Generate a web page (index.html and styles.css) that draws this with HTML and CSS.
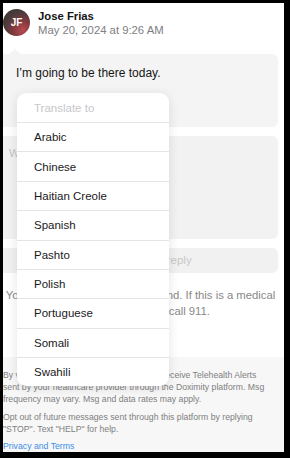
FILE: index.html
```html
<!DOCTYPE html>
<html lang="en">
<head>
<meta charset="utf-8">
<title>Message</title>
<link rel="stylesheet" href="styles.css">
</head>
<body>
<div class="screen">
  <div class="header">
    <div class="avatar">JF</div>
    <div class="meta">
      <div class="name">Jose Frias</div>
      <div class="date">May 20, 2024 at 9:26 AM</div>
    </div>
  </div>
  <div class="bubble">I’m going to be there today.</div>
  <div class="compose">Write a message...</div>
  <div class="reply-btn">Send a secure reply</div>
  <p class="disclaimer">You’ll be notified when we respond. If this is a medical emergency, please call 911.</p>
  <div class="footer">
    <p class="footer-p">By verifying your number, you consent to receive Telehealth Alerts sent by your healthcare provider through the Doximity platform. Msg frequency may vary. Msg and data rates may apply.</p>
    <p class="footer-p">Opt out of future messages sent through this platform by replying "STOP". Text "HELP" for help.</p>
    <a class="footer-link" href="#">Privacy and Terms</a>
  </div>
  <ul class="menu">
    <li class="menu-item menu-head">Translate to</li>
    <li class="menu-item">Arabic</li>
    <li class="menu-item">Chinese</li>
    <li class="menu-item">Haitian Creole</li>
    <li class="menu-item">Spanish</li>
    <li class="menu-item">Pashto</li>
    <li class="menu-item">Polish</li>
    <li class="menu-item">Portuguese</li>
    <li class="menu-item">Somali</li>
    <li class="menu-item">Swahili</li>
  </ul>
</div>
</body>
</html>
```

FILE: styles.css
```css
html, body {
  margin: 0;
  padding: 0;
}
body {
  background: #000;
  width: 290px;
  height: 458px;
  overflow: hidden;
  font-family: "Liberation Sans", Arial, sans-serif;
}
.screen {
  position: relative;
  margin: 3px 0 0 3px;
  width: 281px;
  height: 449px;
  background: #fff;
  overflow: hidden;
  display: flex;
  flex-direction: column;
}
.header {
  display: flex;
  gap: 8px;
  padding-top: 6px;
}
.avatar {
  width: 27px;
  height: 27px;
  border-radius: 50%;
  background: radial-gradient(circle at 72% 78%, #b84a52 0%, #823a3e 32%, #4a3b3c 62%, #353333 100%);
  color: #fff;
  font-weight: bold;
  font-size: 10px;
  display: flex;
  align-items: center;
  justify-content: center;
  flex-shrink: 0;
}
.meta {
  line-height: 14px;
  font-size: 11.3px;
}
.name {
  font-weight: bold;
  color: #141414;
}
.date {
  color: #7d7d82;
}
.bubble {
  position: relative;
  margin: 17px 6px 0 0;
  height: 73px;
  box-sizing: border-box;
  padding: 11px 13px;
  background: #f4f4f4;
  border-radius: 0 6px 6px 0;
  font-size: 12px;
  line-height: 16px;
  color: #161616;
}
.bubble::before {
  content: "";
  position: absolute;
  left: 6px;
  top: -5px;
  border-left: 6px solid transparent;
  border-right: 6px solid transparent;
  border-bottom: 5px solid #f4f4f4;
}
.compose {
  margin: 9px 6px 0 0;
  height: 103px;
  box-sizing: border-box;
  padding: 10px 6px;
  background: #f2f2f2;
  border-radius: 0 6px 6px 0;
  font-size: 11px;
  line-height: 14px;
  color: #c2c2c2;
}
.reply-btn {
  margin: 9px 6px 0 0;
  height: 25px;
  background: #f1f1f1;
  border-radius: 0 6px 6px 0;
  font-size: 11.5px;
  line-height: 25px;
  text-align: center;
  color: #c8c8c8;
}
.disclaimer {
  margin: 14px 6px 0 0;
  font-size: 11.3px;
  line-height: 16px;
  text-align: center;
  color: #888888;
}
.footer {
  margin-top: auto;
  height: 95px;
  box-sizing: border-box;
  padding: 12px 12px 0 0;
  background: #f7f7f7;
  font-size: 8.7px;
  line-height: 12px;
  color: #808080;
}
.footer-p {
  margin: 0 0 6px 0;
}
.footer-p + .footer-p {
  margin-bottom: 5px;
}
.footer-link {
  display: block;
  color: #3b8fe6;
  text-decoration: none;
}
.menu {
  position: absolute;
  left: 14px;
  top: 90px;
  width: 152px;
  margin: 0;
  padding: 0;
  list-style: none;
  background: #fff;
  border-radius: 9px;
  box-shadow: 0 2px 12px rgba(0, 0, 0, 0.11);
  overflow: hidden;
}
.menu-item {
  height: 29.375px;
  box-sizing: border-box;
  border-top: 1px solid #e4e4e6;
  padding-left: 17px;
  display: flex;
  align-items: center;
  font-size: 11.5px;
  color: #1a1a1c;
}
.menu-head {
  border-top: none;
  height: 29px;
  color: #c7c7cc;
}
```
